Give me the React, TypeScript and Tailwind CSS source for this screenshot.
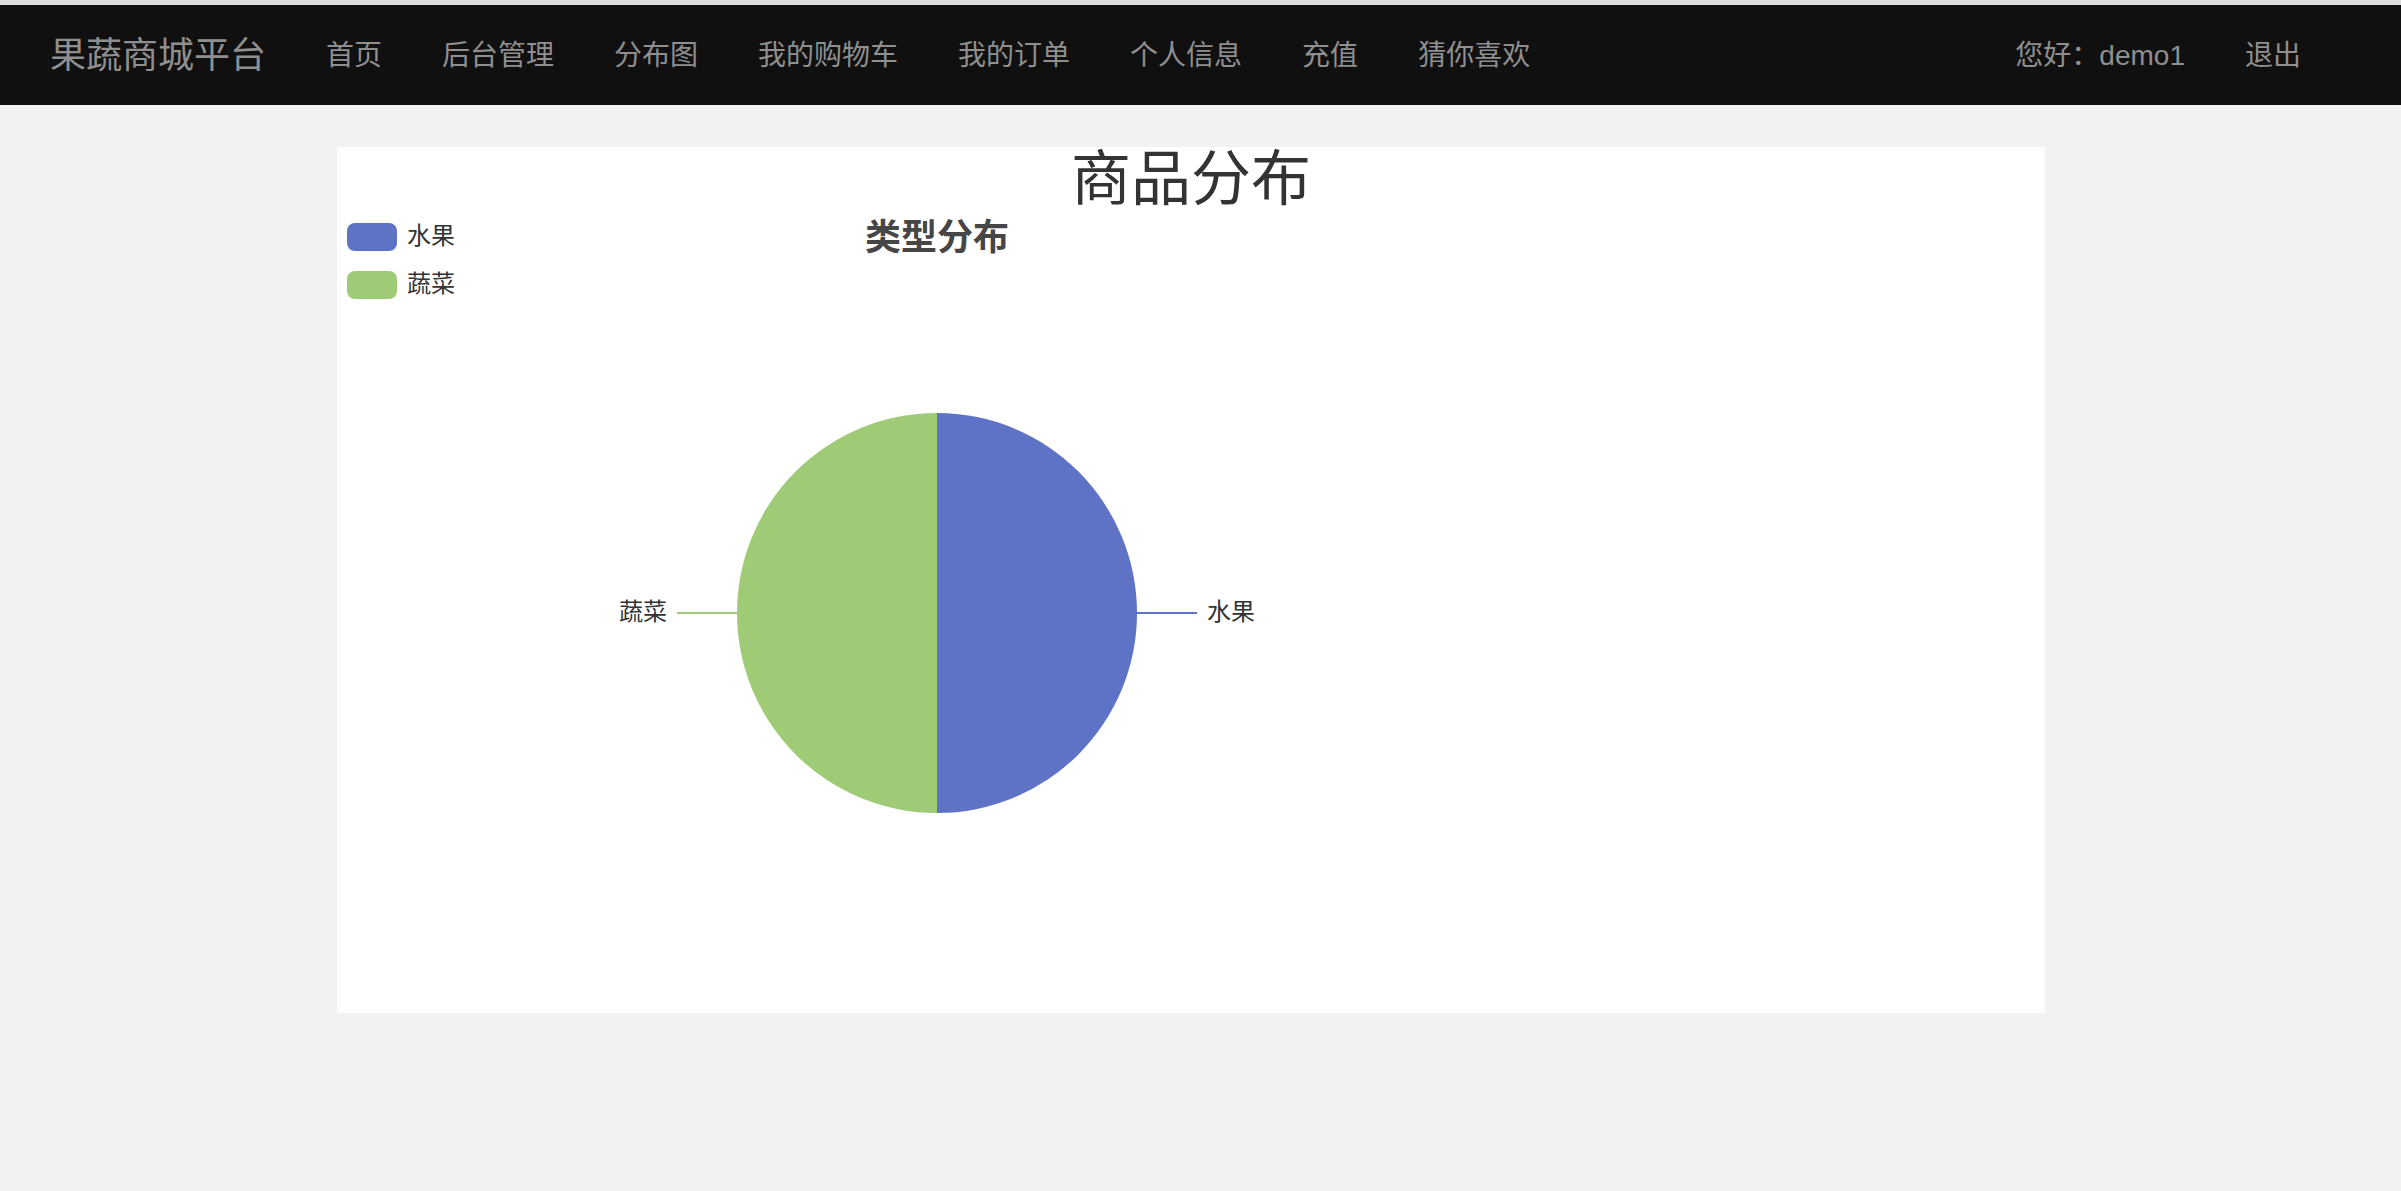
// App.tsx

const navLinks = ["首页", "后台管理", "分布图", "我的购物车", "我的订单", "个人信息", "充值", "猜你喜欢"]

const font = { fontFamily: '"Liberation Sans", "Noto Sans CJK SC", sans-serif' }

function TypePie() {
  return (
    <svg width="1200" height="800" viewBox="0 0 1200 800" className="block">
      {/* Title */}
      <text x="600" y="37" textAnchor="middle" fontSize="36" fontWeight="700" fill="#464646">
        类型分布
      </text>

      {/* Legend */}
      <rect x="10" y="10" width="50" height="28" rx="8" fill="#5e72c6" />
      <text x="70" y="31" fontSize="24" fill="#333">水果</text>
      <rect x="10" y="58" width="50" height="28" rx="8" fill="#9fca76" />
      <text x="70" y="79" fontSize="24" fill="#333">蔬菜</text>

      {/* Slices */}
      <path d="M600 400 L600 200 A200 200 0 0 1 600 600 Z" fill="#5e72c6" />
      <path d="M600 400 L600 600 A200 200 0 0 1 600 200 Z" fill="#9fca76" />

      {/* Label lines */}
      <line x1="800" y1="400" x2="860" y2="400" stroke="#5e72c6" strokeWidth="2" />
      <text x="870" y="407" fontSize="24" fill="#333">水果</text>
      <line x1="340" y1="400" x2="400" y2="400" stroke="#9fca76" strokeWidth="2" />
      <text x="330" y="407" fontSize="24" fill="#333" textAnchor="end">蔬菜</text>
    </svg>
  )
}

export default function App() {
  return (
    <div className="min-h-screen bg-[#f2f2f2]" style={font}>
      <div className="h-[5px] bg-[#dcdcdc]" />

      {/* Navbar */}
      <nav className="flex h-[100px] items-center bg-[#101010] text-[#8f8f8f]">
        <a className="ml-[50px] pr-[30px] pt-[2px] text-[36px] leading-[100px]">果蔬商城平台</a>
        <ul className="flex pt-[2px]">
          {navLinks.map((link) => (
            <li key={link}>
              <a className="block px-[30px] text-[28px] leading-[100px]">{link}</a>
            </li>
          ))}
        </ul>
        <ul className="ml-auto mr-[70px] flex pt-[2px]">
          <li>
            <a className="block px-[30px] text-[28px] leading-[100px]">您好：demo1</a>
          </li>
          <li>
            <a className="block px-[30px] text-[28px] leading-[100px]">退出</a>
          </li>
        </ul>
      </nav>

      {/* Content card */}
      <div className="ml-[337px] mt-[42px] h-[866px] w-[1708px] bg-white">
        <h1 className="h-[66px] text-center text-[60px] font-normal leading-[66px] text-[#333]">商品分布</h1>
        <TypePie />
      </div>
    </div>
  )
}
